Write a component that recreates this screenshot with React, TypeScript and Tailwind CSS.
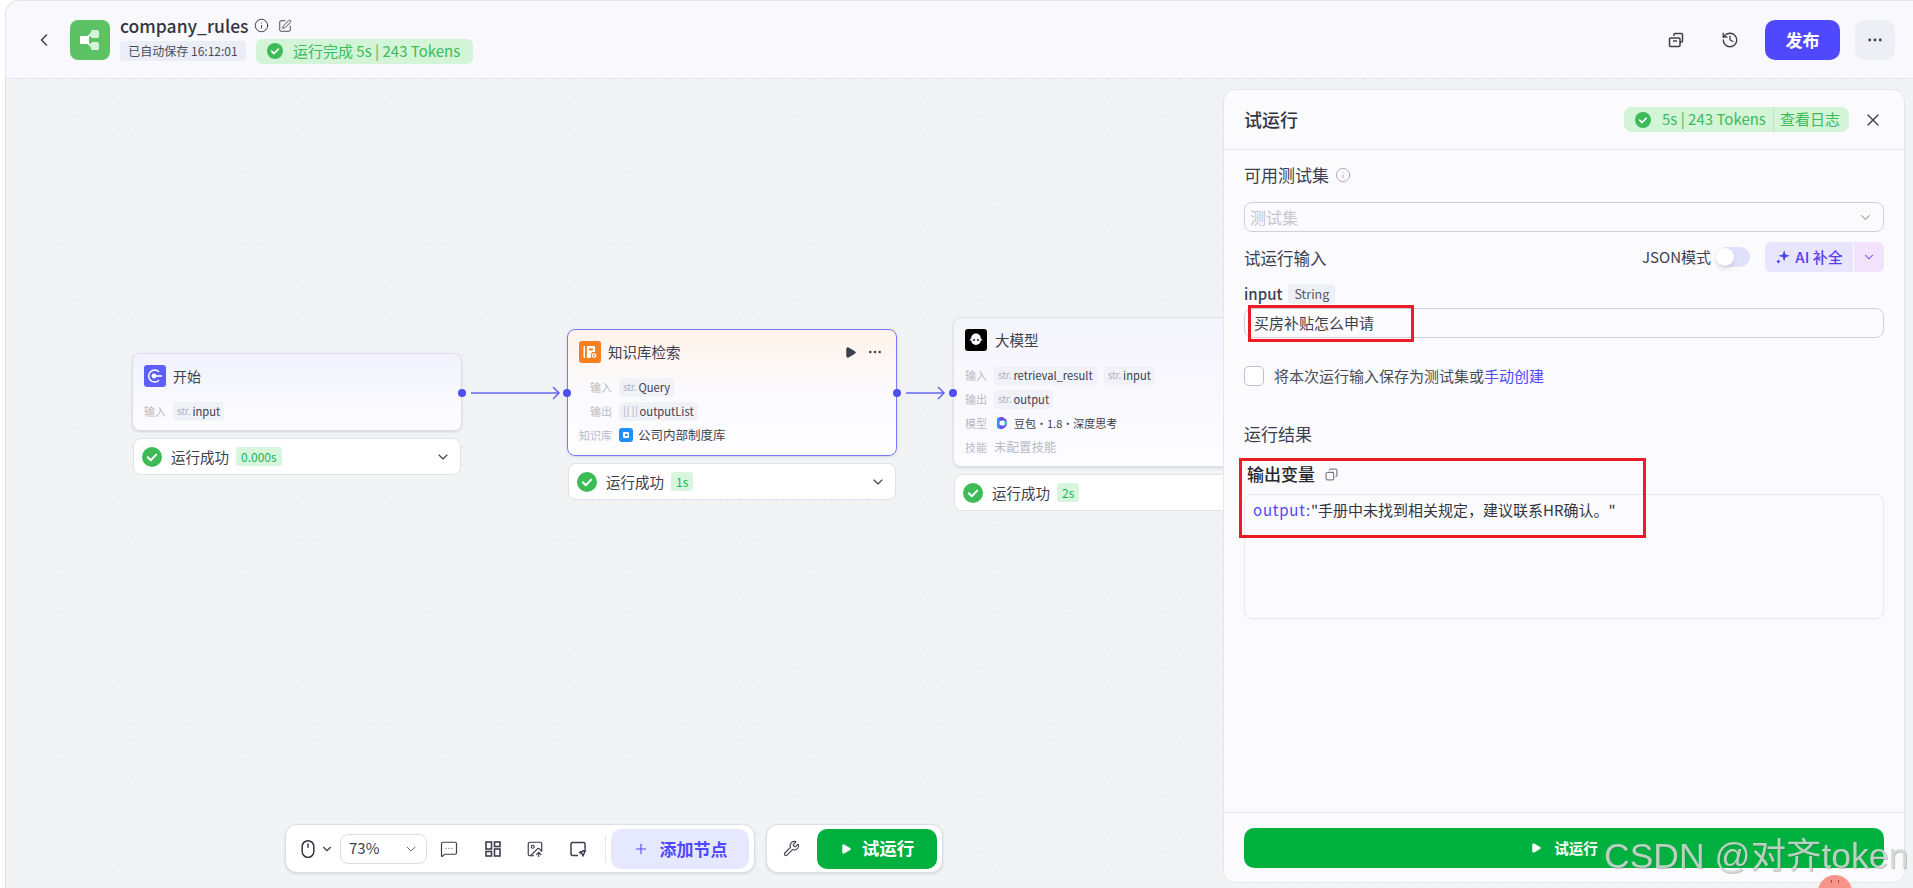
import {
  ChevronDown,
  ChevronLeft,
  Copy,
  Ellipsis,
  History,
  ImageUp,
  Info,
  MessageSquareMore,
  Mouse,
  Play,
  Plus,
  SquarePen,
  Wrench,
  X,
} from 'lucide-react';
import type { ReactNode } from 'react';

const FONT = 'font-["Noto_Sans_CJK_SC","Noto_Sans",sans-serif]';

function CheckDot({ size = 20 }: { size?: number }) {
  return (
    <svg width={size} height={size} viewBox="0 0 20 20" className="shrink-0">
      <circle cx="10" cy="10" r="10" fill="#3cbb57" />
      <path d="M5.8 10.2l3 3 5.4-5.6" fill="none" stroke="#fff" strokeWidth="2" strokeLinecap="round" strokeLinejoin="round" />
    </svg>
  );
}

function Tag({ type = 'str.', name }: { type?: string; name: string }) {
  return (
    <span className="flex h-[19px] items-center gap-[2px] rounded-[4px] bg-[#f1f1f8] px-1 text-[11.2px] text-[#3d3f4d]">
      <span className="text-[10.5px] tracking-[-0.4px] text-[#b4b6c4]">{type}</span>
      {name}
    </span>
  );
}

function Row({ label, labelWidth, children }: { label: string; labelWidth?: string; children: ReactNode }) {
  return (
    <div className="flex h-[24px] items-center gap-[7px]">
      <span className={`text-right text-[11px] text-[#b8bac6] ${labelWidth ?? 'w-[22px]'}`}>{label}</span>
      {children}
    </div>
  );
}

function Status({ time, full = true }: { time: string; full?: boolean }) {
  return (
    <div className="flex h-[37px] items-center rounded-[8px] border border-[#e0e1ea] bg-white pl-[8px] pr-[9px]">
      <CheckDot />
      <span className="ml-[9px] text-[14.5px] text-[#3d3f4d]">运行成功</span>
      <span className="ml-[7px] rounded-[3px] bg-[#d8f5de] px-[5px] py-[1px] text-[12px] leading-[17px] text-[#16b84e]">{time}</span>
      {full && <ChevronDown size={16} strokeWidth={1.6} className="ml-auto text-[#3d3f4d]" />}
    </div>
  );
}

function Handle({ side, top }: { side: 'left' | 'right'; top: string }) {
  return <span className={`absolute h-[8px] w-[8px] rounded-full bg-[#4d50ee] ${top} ${side === 'left' ? 'left-[-5px]' : 'right-[-5px]'}`} />;
}

function Edge({ className, width }: { className: string; width: number }) {
  return (
    <svg width={width} height="14" viewBox={`0 0 ${width} 14`} className={`absolute ${className}`}>
      <path d={`M0 7H${width - 2}M${width - 8} 1l6 6-6 6`} fill="none" stroke="#6366f6" strokeWidth="1.5" />
    </svg>
  );
}

function StartIcon() {
  return (
    <svg width="22" height="22" viewBox="0 0 22 22" className="shrink-0">
      <rect width="22" height="22" rx="3" fill="#5f5ffb" />
      <path d="M15 6.8a6 6 0 1 0 0 8.4" fill="none" stroke="#fff" strokeWidth="1.5" />
      <circle cx="10" cy="11" r="2.4" fill="#fff" />
      <rect x="10" y="10.2" width="8" height="1.6" fill="#fff" />
    </svg>
  );
}

function SearchIcon() {
  return (
    <svg width="22" height="22" viewBox="0 0 22 22" className="shrink-0">
      <rect width="22" height="22" rx="3" fill="#f77f1e" />
      <rect x="4.5" y="5" width="1.6" height="12" fill="#fff" />
      <path d="M8 5h8v6h-3l-1.5 6H8z" fill="#fff" />
      <path d="M10 7.5h4v2h-4z" fill="#f77f1e" />
      <circle cx="15" cy="14.5" r="2.8" fill="#fff" stroke="#f77f1e" />
      <circle cx="15" cy="14.5" r="1.1" fill="#f77f1e" />
    </svg>
  );
}

function ModelIcon() {
  return (
    <svg width="22" height="22" viewBox="0 0 22 22" className="shrink-0">
      <rect width="22" height="22" rx="3" fill="#000" />
      <path d="M11 4.5c3.2 0 4.8 2.4 4.8 5 .8.4 1.6 1.2 1.6 1.9-.6.2-1 0-1.5-.1-.3 3-2.4 4.6-4.9 4.6s-4.6-1.6-4.9-4.6c-.5.1-.9.3-1.5.1 0-.7.8-1.5 1.6-1.9 0-2.6 1.6-5 4.8-5z" fill="#fff" />
      <circle cx="9" cy="11" r=".9" fill="#000" />
      <circle cx="13" cy="11" r=".9" fill="#000" />
    </svg>
  );
}

function BaseIcon() {
  return (
    <svg width="14" height="14" viewBox="0 0 14 14" className="shrink-0">
      <rect width="14" height="14" rx="3" fill="#1e90ff" />
      <rect x="4" y="4" width="6" height="6" rx="1" fill="#fff" />
      <rect x="6" y="6" width="2.5" height="2" fill="#1e90ff" />
    </svg>
  );
}

function DoubaoIcon() {
  return (
    <svg width="12" height="14" viewBox="0 0 12 14" className="ml-[2px] shrink-0">
      <path d="M5 1c3 0 6 2.5 6 6s-3 6-6 6c-1.5 0-3-.8-4-2V3c1-1.2 2.5-2 4-2z" fill="#7a3df0" />
      <path d="M7 3l4.5 4L7 11z" fill="#2fd4c8" />
      <path d="M1 3c1-1.2 2.5-2 4-2L3 7l2 6c-1.5 0-3-.8-4-2z" fill="#3a8bff" />
      <circle cx="6" cy="7" r="2.6" fill="#fff" />
    </svg>
  );
}

function DuplicateIcon() {
  return (
    <svg width="16" height="16" viewBox="0 0 16 16" fill="none" stroke="#3d3f4d" strokeWidth="1.5" strokeLinejoin="round">
      <path d="M6 4V2.5A1 1 0 0 1 7 1.5h6.500a1 1 0 0 1 1 1V9a1 1 0 0 1-1 1H12" />
      <rect x="1.5" y="6" width="10.5" height="8.5" rx="1" />
      <path d="M5 9h4" />
    </svg>
  );
}

function BlocksIcon() {
  return (
    <svg width="18" height="18" viewBox="0 0 18 18" fill="none" stroke="#3d3f4d" strokeWidth="1.6">
      <rect x="2" y="2" width="5.5" height="7" />
      <rect x="10.5" y="2" width="5.5" height="4.5" />
      <rect x="10.5" y="9" width="5.5" height="7" />
      <rect x="2" y="11.5" width="5.5" height="4.5" />
    </svg>
  );
}

function CursorBoxIcon() {
  return (
    <svg width="18" height="18" viewBox="0 0 18 18" fill="none" stroke="#3d3f4d" strokeWidth="1.5" strokeLinejoin="round">
      <path d="M9 15.5H3.5a1.5 1.5 0 0 1-1.5-1.5V4a1.5 1.5 0 0 1 1.5-1.5h11A1.5 1.5 0 0 1 16 4v5" />
      <path d="M16.5 10l-6 2.5 2.5 1 1 2.5z" />
    </svg>
  );
}

export default function App() {
  return (
    <div className={`relative flex h-screen w-screen flex-col overflow-hidden bg-white pl-[5px] ${FONT}`}>
      {/* Top bar */}
      <header className="flex h-[79px] shrink-0 items-center rounded-tl-[14px] border-b border-l border-t border-[#e2e4ee] bg-[#f9f9fd] pr-[18px]">
        <ChevronLeft size={20} strokeWidth={1.8} className="ml-[28px] text-[#3d3f4d]" />
        <div className="ml-[16px] flex h-[40px] w-[40px] items-center justify-center rounded-[8px] bg-[#5cc264]">
          <svg width="26" height="26" viewBox="0 0 26 26">
            <path d="M9 12l6-6M9 14l6 6" stroke="#e6f6e8" strokeWidth="2" />
            <rect x="3" y="9" width="9" height="8" rx="1" fill="#fff" />
            <rect x="14" y="3" width="8" height="8" rx="1.5" fill="#d8f2da" />
            <rect x="14" y="15" width="8" height="8" rx="1.5" fill="#d8f2da" />
          </svg>
        </div>
        <div className="ml-[10px] flex flex-col gap-[3px]">
          <div className="flex h-[20px] items-center">
            <span className="text-[17.5px] font-medium leading-none text-[#33353f]">company_rules</span>
            <Info size={15} strokeWidth={1.6} className="ml-[5px] text-[#3d3f4d]" />
            <SquarePen size={14} strokeWidth={1.6} className="ml-[9px] text-[#3d3f4d]" />
          </div>
          <div className="flex items-center gap-[10px]">
            <span className="flex h-[20px] w-[126px] items-center justify-center rounded-[4px] bg-[#eceef7] text-[12px] text-[#4a4c59]">
              已自动保存 16:12:01
            </span>
            <span className="flex h-[25px] w-[217px] items-center gap-[10px] rounded-[6px] bg-[#d3f4d7] pl-[11px] text-[15px] text-[#3cbb57]">
              <CheckDot size={16} />
              运行完成 5s | 243 Tokens
            </span>
          </div>
        </div>
        <div className="ml-auto flex items-center">
          <DuplicateIcon />
          <History size={18} strokeWidth={1.8} className="ml-[37px] text-[#3d3f4d]" />
          <button className="ml-[26px] h-[40px] w-[75px] rounded-[10px] bg-[#5048fd] text-[17px] font-bold text-white">发布</button>
          <button className="ml-[15px] flex h-[40px] w-[40px] items-center justify-center rounded-[10px] bg-[#eeeef6] text-[#3d3f4d]">
            <Ellipsis size={18} strokeWidth={1.8} />
          </button>
        </div>
      </header>

      {/* Canvas */}
      <main className="relative flex-1 border-l border-[#dcdcdc] bg-[#f2f3f5] bg-[radial-gradient(#eaebee_1px,transparent_1px)] bg-[size:18.4px_18.4px] bg-[position:7px_-9px]">
        <div className="absolute left-[126px] top-[274px] w-[330px]">
          <div className="relative h-[78px] rounded-[8px] border border-[#dcdde8] bg-gradient-to-b from-[#f2f2ff] to-[#fdfdff] px-[11px] pt-[11px] shadow-sm">
            <div className="flex items-center gap-[7px]">
              <StartIcon />
              <span className="text-[14px] text-[#3d3f4d]">开始</span>
            </div>
            <div className="mt-[12px]">
              <Row label="输入">
                <Tag name="input" />
              </Row>
            </div>
            <Handle side="right" top="top-[35px]" />
          </div>
          <div className="mx-[1px] mt-[7px]">
            <Status time="0.000s" />
          </div>
        </div>
        <Edge className="left-[465px] top-[307px]" width={90} />

        <div className="absolute left-[561px] top-[250px] w-[330px]">
          <div className="relative h-[127px] rounded-[8px] border border-[#7b78f8] bg-gradient-to-b from-[#fff3ea] via-[#fbfaff] to-[#fdfdff] px-[11px] pt-[11px] shadow-sm">
            <div className="flex items-center gap-[7px]">
              <SearchIcon />
              <span className="text-[14.5px] text-[#3d3f4d]">知识库检索</span>
              <Play size={13} fill="#3d3f4d" strokeWidth={1.5} className="ml-auto text-[#3d3f4d]" />
              <Ellipsis size={16} strokeWidth={1.8} className="ml-[3px] mr-[2px] text-[#3d3f4d]" />
            </div>
            <div className="mt-[12px]">
              <Row label="输入" labelWidth="w-[33px]">
                <Tag name="Query" />
              </Row>
              <Row label="输出" labelWidth="w-[33px]">
                <Tag type="[{ }]" name="outputList" />
              </Row>
              <Row label="知识库" labelWidth="w-[33px]">
                <BaseIcon />
                <span className="ml-[-2px] text-[12.5px] text-[#3d3f4d]">公司内部制度库</span>
              </Row>
            </div>
            <Handle side="left" top="top-[59px]" />
            <Handle side="right" top="top-[59px]" />
          </div>
          <div className="mx-[1px] mt-[7px]">
            <Status time="1s" />
          </div>
        </div>
        <Edge className="left-[900px] top-[307px]" width={40} />

        <div className="absolute left-[947px] top-[238px] w-[330px]">
          <div className="relative h-[150px] rounded-[8px] border border-[#e0e1ea] bg-gradient-to-b from-[#f4f4fb] to-[#fdfdff] px-[11px] pt-[11px] shadow-sm">
            <div className="flex items-center gap-[8px]">
              <ModelIcon />
              <span className="text-[14.5px] text-[#3d3f4d]">大模型</span>
            </div>
            <div className="mt-[12px]">
              <Row label="输入">
                <Tag name="retrieval_result" />
                <Tag name="input" />
              </Row>
              <Row label="输出">
                <Tag name="output" />
              </Row>
              <Row label="模型">
                <DoubaoIcon />
                <span className="ml-[-1px] text-[11px] text-[#3d3f4d]">豆包·1.8·深度思考</span>
              </Row>
              <Row label="技能">
                <span className="text-[12.5px] text-[#b8bac6]">未配置技能</span>
              </Row>
            </div>
            <Handle side="left" top="top-[71px]" />
          </div>
          <div className="mx-[1px] mt-[7px]">
            <Status time="2s" full={false} />
          </div>
        </div>

        {/* Bottom toolbars */}
        <div className="absolute left-[279px] top-[745px] flex gap-[11px]">
          <div className="flex h-[49px] w-[470px] items-center rounded-[12px] border border-[#dcdde8] bg-white pl-[12px] shadow-sm">
            <Mouse size={20} strokeWidth={1.7} className="text-[#2b2d38]" />
            <ChevronDown size={14} strokeWidth={2} className="ml-[2px] text-[#3d3f4d]" />
            <div className="ml-[6px] flex h-[30px] w-[87px] items-center justify-between rounded-[8px] border border-[#dcdde8] pl-[8px] pr-[7px] text-[15px] text-[#3d3f4d]">
              73%
              <ChevronDown size={16} strokeWidth={1.5} className="text-[#6b6d7a]" />
            </div>
            <MessageSquareMore size={18} strokeWidth={1.6} className="ml-[13px] text-[#3d3f4d]" />
            <span className="ml-[26px]">
              <BlocksIcon />
            </span>
            <ImageUp size={18} strokeWidth={1.6} className="ml-[24px] text-[#3d3f4d]" />
            <span className="ml-[25px]">
              <CursorBoxIcon />
            </span>
            <span className="ml-[18px] h-[26px] w-px bg-[#e6e7ee]" />
            <button className="ml-[5px] flex h-[40px] w-[138px] items-center justify-center gap-[11px] rounded-[10px] bg-[#e6e8ff] text-[17px] font-semibold text-[#5048fd]">
              <Plus size={16} strokeWidth={1.6} />
              添加节点
            </button>
          </div>
          <div className="flex h-[49px] w-[177px] items-center rounded-[12px] border border-[#dcdde8] bg-white pl-[16px] shadow-sm">
            <Wrench size={17} strokeWidth={1.6} className="text-[#3d3f4d]" />
            <button className="ml-[17px] flex h-[40px] w-[120px] items-center justify-center gap-[10px] rounded-[10px] bg-[#00b140] text-[17.5px] font-semibold text-white">
              <Play size={12} fill="#fff" strokeWidth={1} />
              试运行
            </button>
          </div>
        </div>

        {/* Test run panel */}
        <aside className="absolute left-[1217px] top-[10px] flex h-[794px] w-[682px] flex-col rounded-[12px] border border-[#e6e7ee] bg-[#fbfbfe]">
          <div className="flex h-[60px] shrink-0 items-center border-b border-[#e6e7ee] pl-[20px] pr-[21px]">
            <span className="text-[18px] font-medium text-[#33353f]">试运行</span>
            <div className="ml-auto flex h-[25px] w-[225px] items-center rounded-[8px] bg-[#d3f4d7] pl-[11px] text-[15px] text-[#3cbb57]">
              <CheckDot size={16} />
              <span className="ml-[11px] w-[107px] whitespace-nowrap">5s | 243 Tokens</span>
              <span className="ml-[4px] h-full w-px bg-[#bfe6c6]" />
              <span className="ml-[6px]">查看日志</span>
            </div>
            <X size={20} strokeWidth={1.6} className="ml-[14px] text-[#3d3f4d]" />
          </div>

          <div className="flex-1 px-[20px]">
            <div className="flex h-[40px] items-end pb-[2px]">
              <span className="text-[17px] leading-[26px] text-[#3d3f4d]">可用测试集</span>
              <Info size={16} strokeWidth={1.3} className="mb-[5px] ml-[6px] text-[#a0a2ae]" />
            </div>
            <div className="mt-[12px] flex h-[30px] items-center justify-between rounded-[8px] border border-[#cfd0de] pl-[5px] pr-[10px]">
              <span className="text-[16px] text-[#c4c6d0]">测试集</span>
              <ChevronDown size={15} strokeWidth={1.5} className="text-[#6b6d7a]" />
            </div>
            <div className="mt-[10px] flex h-[30px] items-center">
              <span className="mt-[3px] text-[16.5px] text-[#3d3f4d]">试运行输入</span>
              <span className="ml-auto text-[15px] text-[#3d3f4d]">JSON模式</span>
              <span className="relative ml-[5px] h-[20px] w-[34px] rounded-full bg-[#dfe1fb]">
                <span className="absolute left-0 top-[1px] h-[18px] w-[18px] rounded-full bg-white shadow-md" />
              </span>
              <div className="ml-[15px] flex h-[30px] w-[119px] overflow-hidden rounded-[6px]">
                <span className="flex w-[88px] items-center justify-center gap-[4px] bg-[#e8e6ff] text-[15px] font-medium text-[#5a3df0]">
                  <svg width="16" height="16" viewBox="0 0 14 14" fill="#4a45e8">
                    <path d="M8 1l1.2 3.8L13 6 9.2 7.2 8 11 6.8 7.2 3 6l3.8-1.2zM3 9l.7 1.3L5 11l-1.3.7L3 13l-.7-1.3L1 11l1.3-.7z" />
                  </svg>
                  AI 补全
                </span>
                <span className="ml-px flex flex-1 items-center justify-center bg-[#f2e2fc] text-[#7a3df0]">
                  <ChevronDown size={14} strokeWidth={1.8} />
                </span>
              </div>
            </div>
            <div className="mt-[12px] flex h-[20px] items-center gap-[6px]">
              <span className="text-[15px] font-medium text-[#3d3f4d]">input</span>
              <span className="flex h-[20px] w-[47px] items-center justify-center rounded-[4px] bg-[#eff0f6] text-[12.5px] text-[#55576a]">String</span>
            </div>
            <div className="relative mt-[4px] flex h-[30px] items-center rounded-[8px] border border-[#cfd0de] pl-[9px] text-[15px] text-[#3d3f4d]">
              买房补贴怎么申请
              <span className="absolute left-[3px] top-[-4px] h-[37px] w-[166px] border-[3px] border-[#ec1c24]" />
            </div>
            <label className="mt-[27px] flex items-center gap-[10px] text-[15px] text-[#4a4c59]">
              <span className="h-[20px] w-[20px] rounded-[5px] border border-[#bfc0d0] bg-white" />
              <span>
                将本次运行输入保存为测试集或<span className="text-[#5048fd]">手动创建</span>
              </span>
            </label>
            <div className="mt-[33px] text-[17px] leading-[26px] text-[#3d3f4d]">运行结果</div>
            <div className="relative mt-[15px]">
              <div className="flex h-[25px] items-center pl-[3px] text-[17px] font-medium text-[#26272f]">
                输出变量
                <Copy size={13} strokeWidth={1.5} className="ml-[10px] -scale-x-100 text-[#3d3f4d]" />
              </div>
              <div className="mt-[7px] h-[125px] rounded-[8px] border border-[#e6e7f0] px-[8px] py-[4px] text-[15px]">
                <span className="tracking-[0.8px] text-[#5048fd]">output:</span>
                <span className="text-[#33353f]">"手册中未找到相关规定，建议联系HR确认。"</span>
              </div>
              <span className="absolute left-[-5px] top-[-4px] h-[80px] w-[407px] border-[3px] border-[#ec1c24]" />
            </div>
          </div>

          <div className="flex h-[70px] shrink-0 items-center border-t border-[#e6e7ee] px-[20px]">
            <button className="flex h-[40px] w-full items-center justify-center gap-[12px] rounded-[10px] bg-[#00b140] text-[14.5px] font-semibold text-white">
              <Play size={12} fill="#fff" strokeWidth={1} />
              试运行
            </button>
          </div>
        </aside>
      </main>

      {/* Page watermark */}
      <span className='absolute left-[1604px] top-[833px] font-["Liberation_Sans","Noto_Sans_CJK_SC",sans-serif] text-[35.5px] leading-[46px] whitespace-nowrap text-[rgba(215,218,215,0.85)] drop-shadow-[1px_1px_0_rgba(90,90,90,0.4)]'>
        CSDN @对齐token
      </span>
      <span className="absolute left-[1818px] top-[875px] flex h-[34px] w-[34px] justify-center gap-[6px] rounded-full bg-[#f7958a] pt-[5px]">
        <span className="h-[3px] w-[1px] bg-[#8a5048]" />
        <span className="h-[3px] w-[1px] bg-[#8a5048]" />
      </span>
    </div>
  );
}
